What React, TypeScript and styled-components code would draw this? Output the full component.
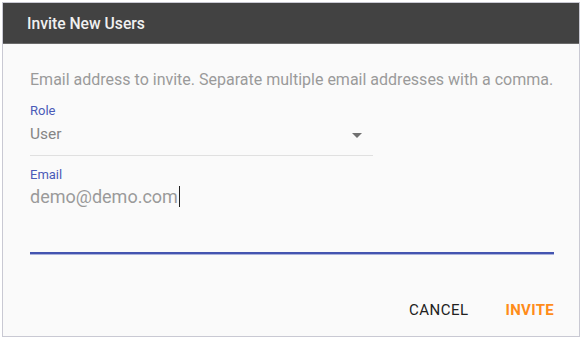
import React from "react";
import styled, { createGlobalStyle } from "styled-components";

const GlobalStyle = createGlobalStyle`
  html, body {
    margin: 0;
    padding: 0;
    background: #ffffff;
    font-family: Roboto, "Liberation Sans", Arial, sans-serif;
  }
`;

const Page = styled.div`
  width: 583px;
  height: 340px;
  padding: 2px 0 0 2px;
  box-sizing: border-box;
`;

const Dialog = styled.div`
  width: 578px;
  height: 335px;
  box-sizing: border-box;
  border: 1px solid #c9c9d3;
  background: #fafafa;
  display: flex;
  flex-direction: column;
`;

const Header = styled.div`
  height: 40px;
  background: #424242;
  display: flex;
  align-items: center;
  padding-left: 24px;
  border-bottom: 1px solid #6a6a6a;

  & > h2 {
    margin: 0;
    font-size: 15.7px;
    font-weight: 500;
    color: #f0f0f0;
  }
`;

const Body = styled.div`
  flex: 1;
  padding: 26px 25px 0 27px;
  display: flex;
  flex-direction: column;
`;

const Hint = styled.p`
  margin: 0;
  font-size: 16px;
  line-height: 20px;
  color: #9a9a9a;
  white-space: nowrap;
`;

const Field = styled.div<{ $width?: string; $top: number }>`
  width: ${(p) => p.$width || "100%"};
  margin-top: ${(p) => p.$top}px;
`;

const Label = styled.div`
  font-size: 13px;
  line-height: 16px;
  color: #4a5ab8;
`;

const SelectValue = styled.div`
  height: 30px;
  display: flex;
  align-items: center;
  justify-content: space-between;
  font-size: 15.5px;
  color: #858585;
  border-bottom: 1px solid #e0e0e0;
  padding-right: 11px;
  padding-bottom: 6px;
`;

const Arrow = styled.span`
  width: 0;
  height: 0;
  border-left: 5px solid transparent;
  border-right: 5px solid transparent;
  border-top: 5px solid #707070;
  margin-top: 3px;
`;

const EmailInput = styled.div`
  height: 69px;
  border-bottom: 2px solid #4354b0;
  box-shadow: 0 1px 0 #aab2dc;
`;

const EmailText = styled.span`
  font-size: 18px;
  line-height: 28px;
  color: #9a9a9a;
  border-right: 1px solid #222;
  padding-right: 1px;
`;

const Actions = styled.div`
  display: flex;
  justify-content: flex-end;
  align-items: center;
  gap: 37px;
  padding: 0 25px 17px 0;
  height: 36px;
  box-sizing: border-box;
`;

const Button = styled.button<{ $primary?: boolean }>`
  background: none;
  border: none;
  padding: 0;
  font-family: Roboto, "Liberation Sans", Arial, sans-serif;
  font-size: 15px;
  font-weight: ${(p) => (p.$primary ? 700 : 400)};
  letter-spacing: ${(p) => (p.$primary ? "0.3px" : "0.5px")};
  color: ${(p) => (p.$primary ? "#ff8c1a" : "#212121")};
  text-transform: uppercase;
`;

export default function App() {
  return (
    <Page>
      <GlobalStyle />
      <Dialog>
        <Header>
          <h2>Invite New Users</h2>
        </Header>
        <Body>
          <Hint>Email address to invite. Separate multiple email addresses with a comma.</Hint>
          <Field $width="343px" $top={13}>
            <Label>Role</Label>
            <SelectValue>
              <span>User</span>
              <Arrow />
            </SelectValue>
          </Field>
          <Field $top={11}>
            <Label>Email</Label>
            <EmailInput>
              <EmailText>demo@demo.com</EmailText>
            </EmailInput>
          </Field>
        </Body>
        <Actions>
          <Button>Cancel</Button>
          <Button $primary>Invite</Button>
        </Actions>
      </Dialog>
    </Page>
  );
}
